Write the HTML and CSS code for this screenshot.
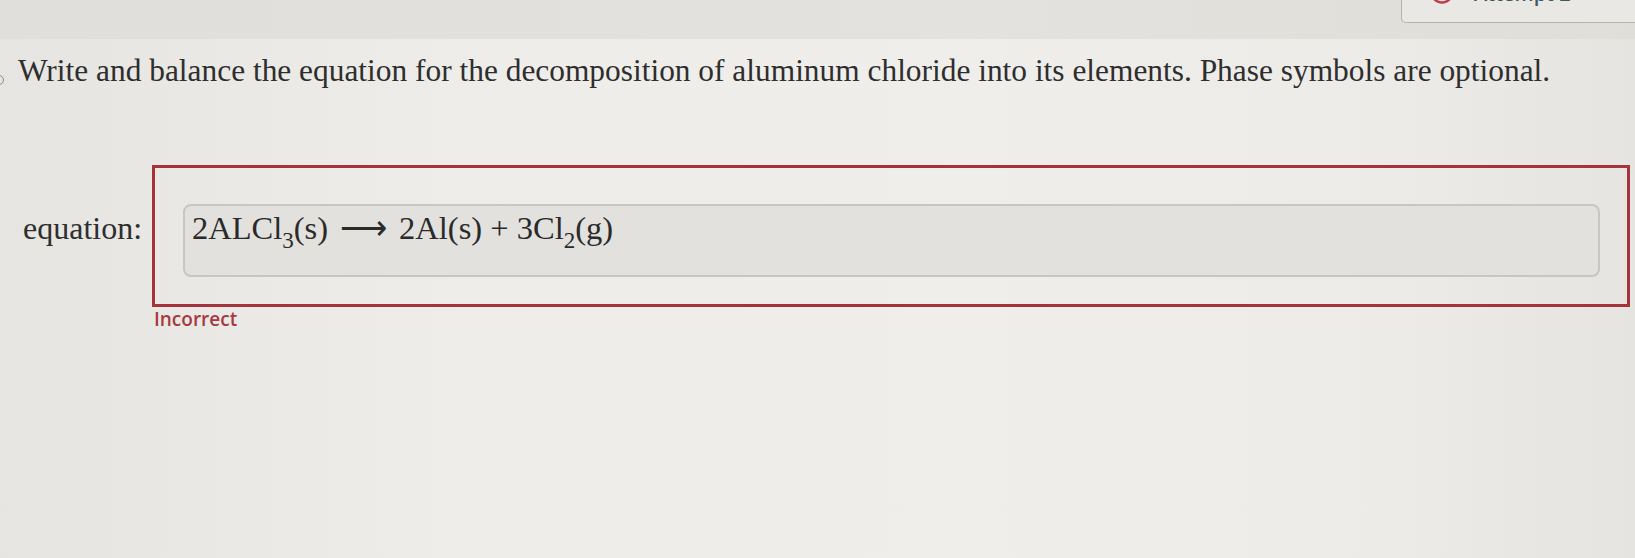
FILE: index.html
```html
<!DOCTYPE html>
<html>
<head>
<meta charset="utf-8">
<link rel="stylesheet" href="styles.css">
</head>
<body>
<header class="topbar">
  <div class="attempt">
    <svg class="attempt-icon" width="26" height="26" viewBox="0 0 26 26"><circle cx="13" cy="13" r="10.5" fill="none" stroke="#c23b4c" stroke-width="2.5"/></svg>
    <span class="attempt-text">Attempt 2</span>
  </div>
</header>
<main class="content">
  <p class="question"><span class="bullet"></span>Write and balance the equation for the decomposition of aluminum chloride into its elements. Phase symbols are optional.</p>
  <div class="answer-row">
    <span class="label">equation:</span>
    <div class="answer-box">
      <div class="input">2ALCl<sub>3</sub>(s)<span class="arrow">⟶</span>2Al(s) + 3Cl<sub>2</sub>(g)</div>
    </div>
  </div>
  <div class="feedback">Incorrect</div>
</main>
</body>
</html>
```
FILE: styles.css
```css
html, body {
  margin: 0;
  padding: 0;
}
body {
  width: 1635px;
  height: 558px;
  overflow: hidden;
  background: linear-gradient(90deg, #e6e5e2 0%, #eeedea 30%, #efeeeb 60%, #ecebe8 85%, #e5e4e1 100%);
  font-family: "Liberation Serif", "Times New Roman", serif;
  color: #2e2e2e;
}
.topbar {
  height: 39px;
  background: linear-gradient(90deg, #e0dfdb 0%, #e3e2de 60%, #dfded9 100%);
  display: flex;
  justify-content: flex-end;
  align-items: flex-start;
}
.attempt {
  width: 234px;
  height: 23px;
  border: 1px solid #b5b3ae;
  border-top: none;
  border-right: none;
  border-bottom-left-radius: 5px;
  background: #e9e8e4;
  display: flex;
  align-items: flex-end;
  gap: 19px;
  padding-left: 27px;
  box-sizing: border-box;
  overflow: hidden;
}
.attempt-icon {
  margin-bottom: 17px;
  flex: none;
}
.attempt-text {
  font-family: "Open Sans", sans-serif;
  font-weight: 600;
  font-size: 20px;
  color: #3d5a60;
  line-height: 20px;
  margin-bottom: 18px;
  white-space: nowrap;
}
.content {
  padding: 0 0 0 18px;
}
.question {
  margin: 14px 0 0 0;
  font-size: 31.4px;
  line-height: 36px;
  position: relative;
  white-space: nowrap;
}
.bullet {
  position: absolute;
  left: -24px;
  top: 22px;
  width: 8px;
  height: 8px;
  border-radius: 50%;
  border: 1px solid #8a8a8a;
}
.answer-row {
  display: flex;
  align-items: baseline;
  margin-top: 76px;
}
.label {
  font-size: 32px;
  width: 134px;
  padding-left: 5px;
  box-sizing: border-box;
  flex: none;
}
.answer-box {
  width: 1478px;
  box-sizing: border-box;
  border: 3px solid #a3343e;
  padding: 36px 27px 27px 28px;
}
.input {
  height: 73px;
  box-sizing: border-box;
  border: 2px solid #c8c6c2;
  border-radius: 8px;
  background: #e2e1dd;
  font-size: 32.5px;
  line-height: 38px;
  padding: 3px 0 0 7px;
  color: #2a2a2a;
}
.input sub {
  font-size: 23px;
  vertical-align: -9px;
  line-height: 0;
}
.arrow {
  margin: 0 12px;
}
.feedback {
  margin: 0 0 0 136px;
  font-family: "Open Sans", sans-serif;
  font-weight: 600;
  font-size: 19px;
  line-height: 24px;
  color: #a63a42;
}
```
